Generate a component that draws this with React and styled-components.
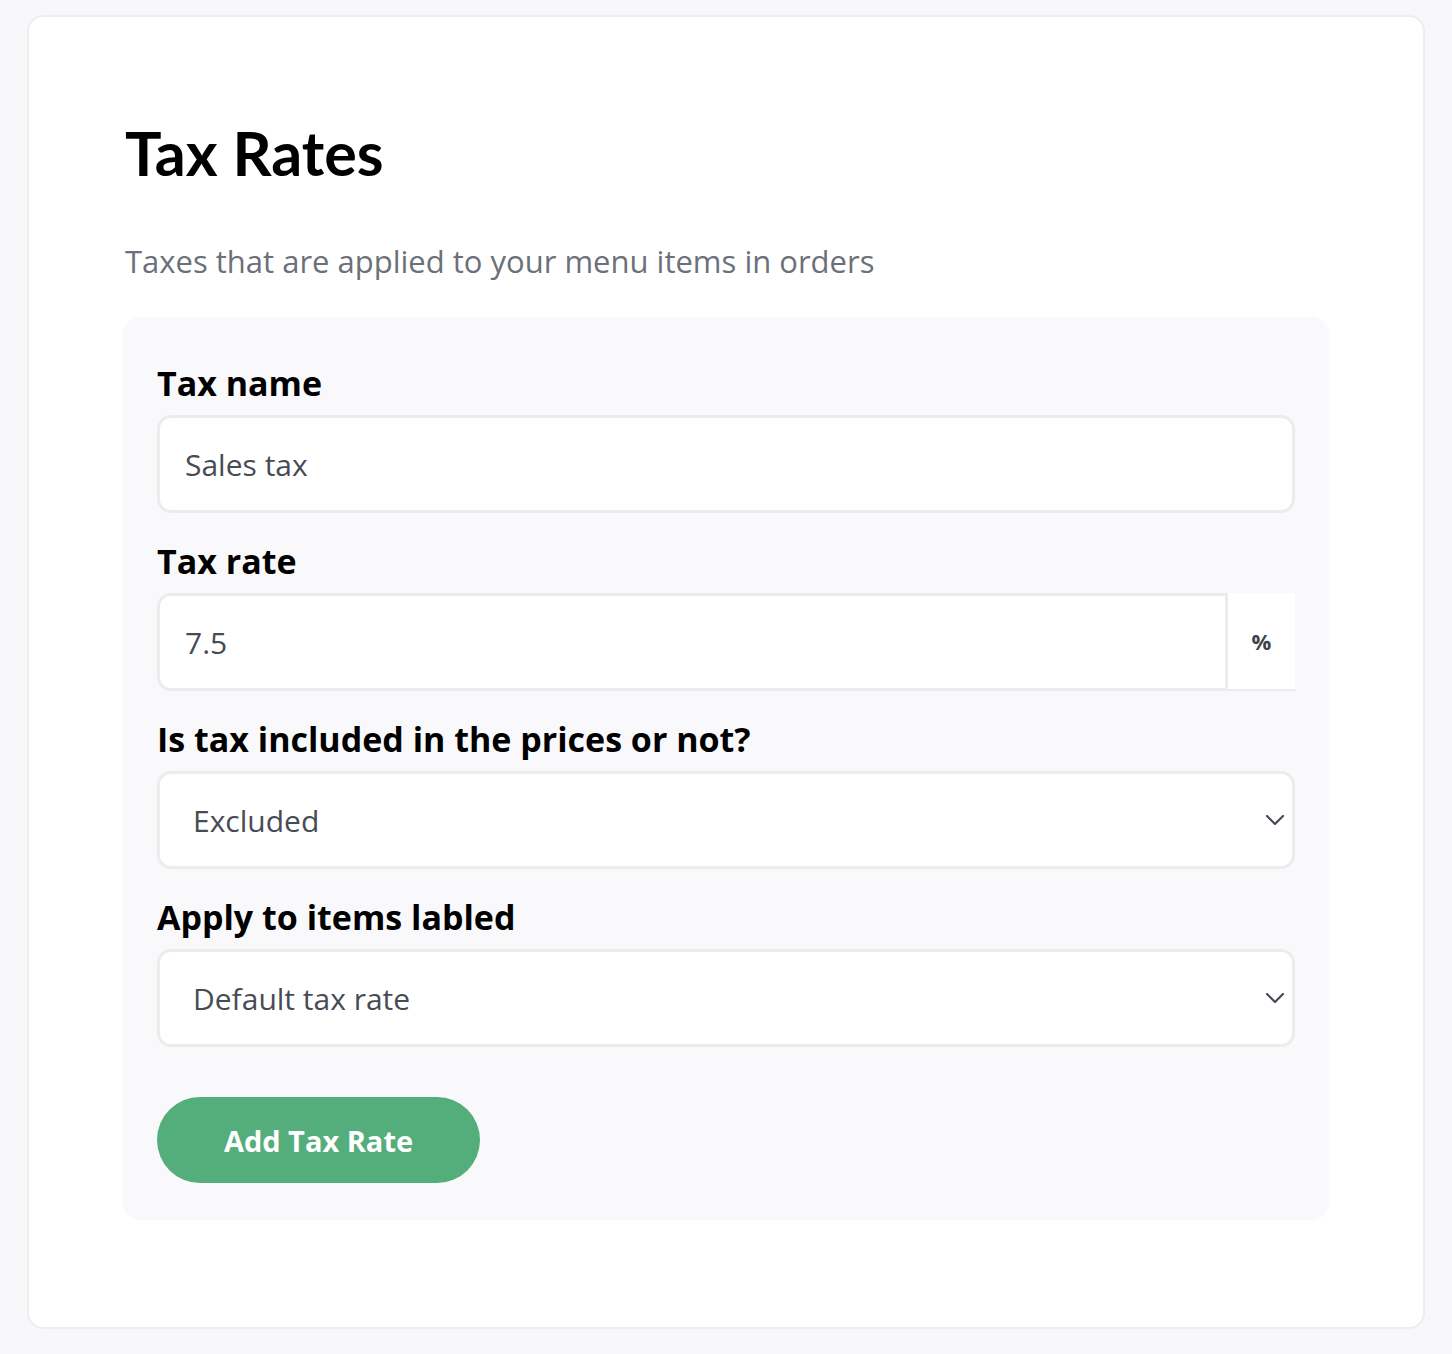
import React from "react";
import styled, { createGlobalStyle } from "styled-components";

const Global = createGlobalStyle`
  html, body { margin: 0; padding: 0; background: #f8f8fa; }
  body { font-family: "Open Sans", "Liberation Sans", sans-serif; }
  * { box-sizing: border-box; }
`;

const Page = styled.div`
  padding: 15px 27px 27px 27px;
  min-height: 1354px;
`;

const Card = styled.div`
  background: #fff;
  border: 2px solid #eeeef0;
  border-radius: 16px;
  padding: 100px 94px 107px 94px;
`;

const Title = styled.h1`
  margin: 0 0 0 2px;
  font-family: "Lato", sans-serif;
  font-weight: 700;
  font-size: 61px;
  line-height: 72px;
  color: #000;
`;

const Subtitle = styled.p`
  margin: 52px 0 36px 2px;
  font-size: 31px;
  line-height: 40px;
  color: #6b7079;
`;

const Panel = styled.div`
  background: #f9f9fb;
  border-radius: 18px;
  box-shadow: 0 0 6px rgba(0, 0, 0, 0.015);
  padding: 44px 34px 37px;
`;

const Field = styled.div`
  display: flex;
  flex-direction: column;
  margin-bottom: 26px;
`;

const Label = styled.label`
  font-size: 34px;
  line-height: 44px;
  font-weight: 700;
  color: #000;
  margin-bottom: 10px;
`;

const InputBox = styled.div`
  height: 98px;
  background: #fff;
  border: 3px solid #ececec;
  border-radius: ${(p) => (p.$addon ? "14px 0 0 14px" : "14px")};
  display: flex;
  align-items: center;
  padding: ${(p) => (p.$select ? "0 8px 0 33px" : "0 0 0 25px")};
  font-size: 30px;
  color: #474c54;
  flex: ${(p) => (p.$addon ? "1" : "none")};
`;

const Row = styled.div`
  display: flex;
`;

const Addon = styled.div`
  width: 67px;
  height: 98px;
  background: #fff;
  border-bottom: 2px solid #ececec;
  display: flex;
  align-items: center;
  justify-content: center;
  font-size: 22px;
  font-weight: 700;
  color: #3e434b;
`;

const Value = styled.span`
  flex: 1;
`;

const Button = styled.button`
  margin-top: 24px;
  width: 323px;
  height: 86px;
  border: none;
  border-radius: 43px;
  background: #54ae7b;
  color: #fff;
  font-family: "Open Sans", sans-serif;
  font-weight: 700;
  font-size: 29px;
  cursor: pointer;
`;

const Chevron = () => (
  <svg width="18" height="10" viewBox="0 0 18 10" fill="none">
    <path d="M1 1l8 8 8-8" stroke="#474c54" strokeWidth="2.2" strokeLinecap="round" strokeLinejoin="round" />
  </svg>
);

export default function App() {
  return (
    <Page>
      <Global />
      <Card>
        <Title>Tax Rates</Title>
        <Subtitle>Taxes that are applied to your menu items in orders</Subtitle>
        <Panel>
          <Field>
            <Label>Tax name</Label>
            <InputBox>Sales tax</InputBox>
          </Field>
          <Field>
            <Label>Tax rate</Label>
            <Row>
              <InputBox $addon>7.5</InputBox>
              <Addon>%</Addon>
            </Row>
          </Field>
          <Field>
            <Label>Is tax included in the prices or not?</Label>
            <InputBox $select>
              <Value>Excluded</Value>
              <Chevron />
            </InputBox>
          </Field>
          <Field>
            <Label>Apply to items labled</Label>
            <InputBox $select>
              <Value>Default tax rate</Value>
              <Chevron />
            </InputBox>
          </Field>
          <Button>Add Tax Rate</Button>
        </Panel>
      </Card>
    </Page>
  );
}
